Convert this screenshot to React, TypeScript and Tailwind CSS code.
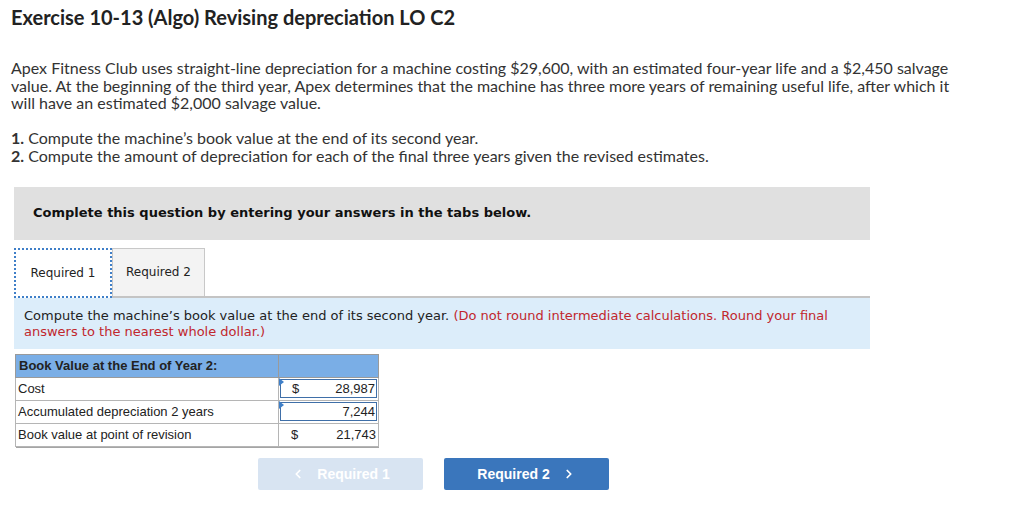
import React from "react";
import { ChevronLeft, ChevronRight } from "lucide-react";

// ─── Data ─────────────────────────────────────────────────────────────────────

const rows = [
  { label: "Cost", dollar: true, value: "28,987", input: true },
  { label: "Accumulated depreciation 2 years", dollar: false, value: "7,244", input: true },
  { label: "Book value at point of revision", dollar: true, value: "21,743", input: false },
];

// ─── Component ────────────────────────────────────────────────────────────────

export default function App() {
  return (
    <div className="min-h-screen bg-white text-[#333] font-['Lato','Open_Sans',sans-serif]">
      <div className="px-[11px] pt-[6px]">
        {/* Title */}
        <h1 className="text-[20px] font-bold text-[#222] leading-[22px]">
          Exercise 10-13 (Algo) Revising depreciation LO C2
        </h1>

        {/* Problem text */}
        <p className="mt-[31px] w-[962px] text-[16px] leading-[17.5px] text-[#333]">
          Apex Fitness Club uses straight-line depreciation for a machine costing $29,600, with an estimated four-year life and a $2,450 salvage value. At the beginning of the third year, Apex determines that the machine has three more years of remaining useful life, after which it will have an estimated $2,000 salvage value.
        </p>

        <div className="mt-[17px] text-[16px] leading-[18px]">
          <p>
            <span className="font-bold">1.</span> Compute the machine’s book value at the end of its second year.
          </p>
          <p>
            <span className="font-bold">2.</span> Compute the amount of depreciation for each of the final three years given the revised estimates.
          </p>
        </div>
      </div>

      <div className="ml-[14px] w-[856px] mt-[22px]">
        {/* Instruction banner */}
        <div className="h-[53px] bg-[#e0e0e0] flex items-center pl-[19px] pb-[1px] font-['DejaVu_Sans',sans-serif] text-[13px] font-bold text-[#111]">
          Complete this question by entering your answers in the tabs below.
        </div>

        {/* Tabs */}
        <div className="mt-[8px] flex items-end border-b-2 border-[#c4c4c4] font-['DejaVu_Sans',sans-serif] text-[12px] text-[#222]">
          <div className="h-[50px] w-[98px] flex items-center justify-center bg-white border-2 border-dotted border-[#3f7fc8] -mb-[2px]">
            Required 1
          </div>
          <div className="h-[48px] w-[93px] flex items-center justify-center bg-[#f3f3f3] border border-b-0 border-[#c8c8c8]">
            Required 2
          </div>
        </div>

        {/* Prompt */}
        <div className="bg-[#dcedfa] px-[10px] pt-[10px] pb-[9px] font-['DejaVu_Sans',sans-serif] text-[13px] leading-[16px] text-[#222]">
          Compute the machine’s book value at the end of its second year.{" "}
          <span className="text-[#c1272d]">
            (Do not round intermediate calculations. Round your final answers to the nearest whole dollar.)
          </span>
        </div>

        {/* Table */}
        <table className="mt-[5px] ml-[1px] border-collapse font-['Liberation_Sans',Arial,sans-serif] text-[13px] text-[#222]">
          <tbody>
            <tr className="h-[23px] bg-[#7aaee6]">
              <td className="w-[263px] border border-[#9a9a9a] px-[3px] font-bold">
                Book Value at the End of Year 2:
              </td>
              <td className="w-[100px] border border-[#9a9a9a]" />
            </tr>
            {rows.map((r) => (
              <tr key={r.label} className="h-[23px]">
                <td className="border border-[#b5b5b5] px-[2px]">{r.label}</td>
                <td className="border border-[#b5b5b5] p-0 relative">
                  {r.input && (
                    <span className="absolute left-0 top-0 w-0 h-0 border-t-[4px] border-b-[4px] border-l-[5px] border-t-transparent border-b-transparent border-l-[#3f7fc8]" />
                  )}
                  <div
                    className={`mx-[1px] h-[19px] flex items-center justify-between pl-[11px] pr-[1px] ${
                      r.input ? "border border-[#3f6fa8] bg-white" : ""
                    }`}
                  >
                    <span>{r.dollar ? "$" : ""}</span>
                    <span>{r.value}</span>
                  </div>
                </td>
              </tr>
            ))}
            <tr className="h-[2px]">
              <td className="bg-[#a5a5a5] p-0 h-[2px]" />
              <td className="bg-[#a5a5a5] p-0 h-[2px]" />
            </tr>
          </tbody>
        </table>

        {/* Nav buttons */}
        <div className="mt-[10px] flex gap-[21px] pl-[244px] font-['Liberation_Sans',Arial,sans-serif] text-[14px] font-bold text-white">
          <div className="w-[165px] h-[32px] rounded-[2px] bg-[#d8e4f2] flex items-center justify-center gap-[12px]">
            <ChevronLeft size={14} strokeWidth={3} />
            Required 1
          </div>
          <div className="w-[165px] h-[32px] rounded-[2px] bg-[#3a76bc] flex items-center justify-center gap-[12px]">
            Required 2
            <ChevronRight size={14} strokeWidth={3} />
          </div>
        </div>
      </div>
    </div>
  );
}
